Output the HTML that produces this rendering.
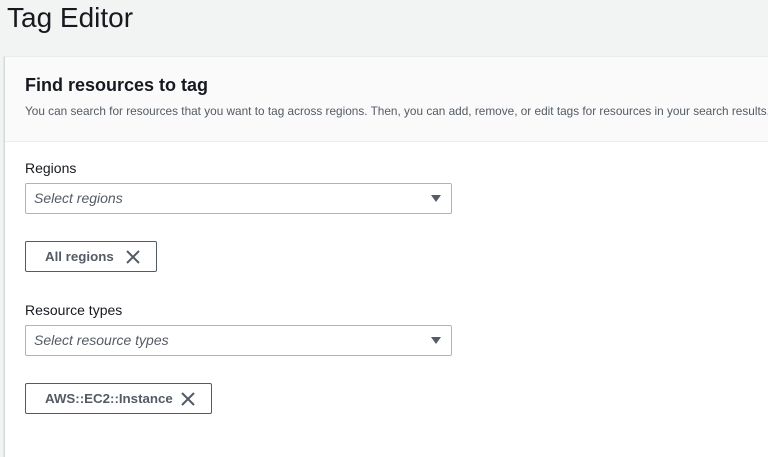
<!DOCTYPE html>
<html><head><style>
body{margin:0;width:768px;height:434px;overflow:hidden;background:#f2f3f3;font-family:"Liberation Sans",sans-serif;color:#16191f;position:relative}
.t{position:absolute;left:7px;top:1px;font-size:28px;line-height:34px;color:#16191f}
.panel{position:absolute;left:4px;top:56px;width:800px;height:400px;background:#fff;border-left:1px solid #d5dbdb;border-top:1px solid #eaeded;box-shadow:0 1px 1px rgba(0,28,36,.3)}
.hd{height:84px;background:#fafafa;border-bottom:1px solid #eaeded;position:relative}
.h2{position:absolute;left:20px;top:18px;font-size:18px;font-weight:bold}
.ds{position:absolute;left:20px;top:47px;font-size:11.8px;color:#545b64;white-space:nowrap}
.lb{position:absolute;left:20px;font-size:14px}
.sel{position:absolute;left:20px;width:427px;height:31px;border:1px solid #aab7b8;border-radius:2px;font-size:14px;font-style:italic;color:#545b64;line-height:29px;box-sizing:border-box;padding-left:8px}
.sel:after{content:"";position:absolute;right:10px;top:11px;border-left:5px solid transparent;border-right:5px solid transparent;border-top:7px solid #545b64}
.chip{position:absolute;left:20px;height:31px;border:1px solid #545b64;border-radius:2px;box-sizing:border-box;font-size:13.3px;font-weight:bold;color:#545b64;line-height:29px;padding-left:19px}
.chip svg{position:absolute;top:8px}
</style></head><body>
<div class="t">Tag Editor</div>
<div class="panel">
<div class="hd"><div class="h2">Find resources to tag</div><div class="ds">You can search for resources that you want to tag across regions. Then, you can add, remove, or edit tags for resources in your search results.</div></div>
<div class="lb" style="top:103px">Regions</div>
<div class="sel" style="top:126px">Select regions</div>
<div class="chip" style="top:184px;width:132px">All regions<svg style="left:100px" width="14" height="14"><path d="M1 1L13 13M13 1L1 13" stroke="#545b64" stroke-width="2"/></svg></div>
<div class="lb" style="top:245px">Resource types</div>
<div class="sel" style="top:268px">Select resource types</div>
<div class="chip" style="top:326px;width:187px">AWS::EC2::Instance<svg style="left:155px" width="14" height="14"><path d="M1 1L13 13M13 1L1 13" stroke="#545b64" stroke-width="2"/></svg></div>
</div>
</body></html>
